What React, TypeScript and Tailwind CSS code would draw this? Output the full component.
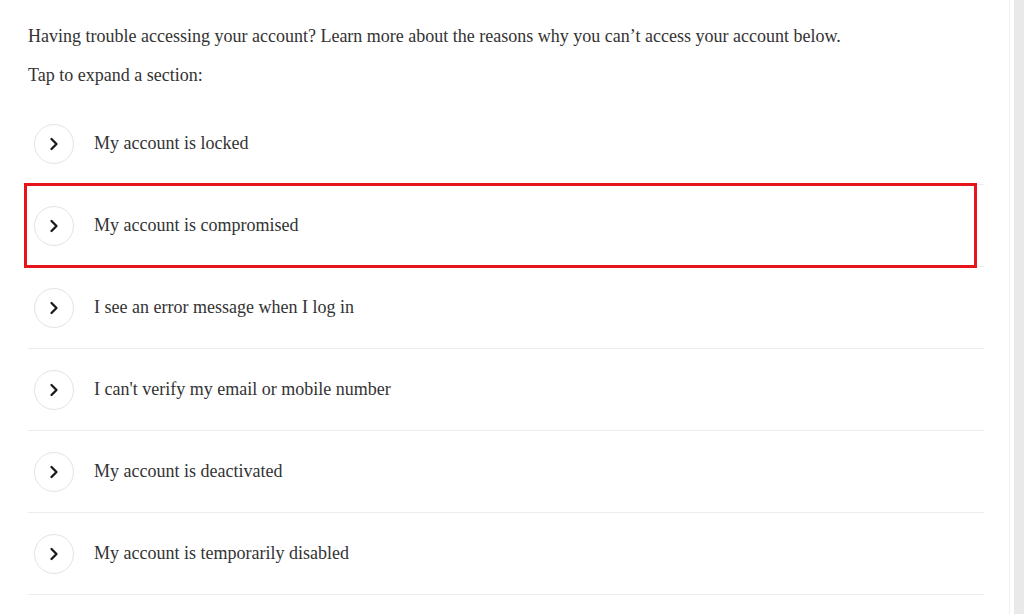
const sections = [
  'My account is locked',
  'My account is compromised',
  'I see an error message when I log in',
  "I can't verify my email or mobile number",
  'My account is deactivated',
  'My account is temporarily disabled',
];

function Chevron() {
  return (
    <svg width="10" height="14" viewBox="0 0 10 14" fill="none">
      <path d="M2.5 2l5 5-5 5" stroke="#1a1a1a" strokeWidth="2.3" strokeLinecap="round" strokeLinejoin="round" />
    </svg>
  );
}

export default function App() {
  return (
    <div className="flex h-[614px] w-[1024px] overflow-hidden bg-white font-['Liberation_Serif','Times_New_Roman',serif] text-[18px] text-[#333]">
      <div className="flex-1 pl-[28px] pr-[25px] pt-[24px]">
        <p className="leading-6">
          Having trouble accessing your account? Learn more about the reasons why you can’t access your account below.
        </p>
        <p className="mt-[15px] leading-6">Tap to expand a section:</p>
        <ul className="mt-[16px]">
          {sections.map((label, i) => (
            <li key={label} className="relative flex h-[82px] items-center border-b border-[#ececec]">
              <div className="ml-[6px] flex h-[40px] w-[40px] items-center justify-center rounded-full border border-[#e3e3e3]">
                <Chevron />
              </div>
              <span className="ml-[20px]">{label}</span>
              {i === 1 && (
                <div className="pointer-events-none absolute -left-[4px] -top-[2px] h-[85px] w-[953px] border-[3px] border-[#e8141c]" />
              )}
            </li>
          ))}
        </ul>
      </div>
      <div className="w-[15px] border-l border-[#efefef] pl-[4px]">
        <div className="h-full w-full bg-[#e9e9e9]" />
      </div>
    </div>
  );
}
